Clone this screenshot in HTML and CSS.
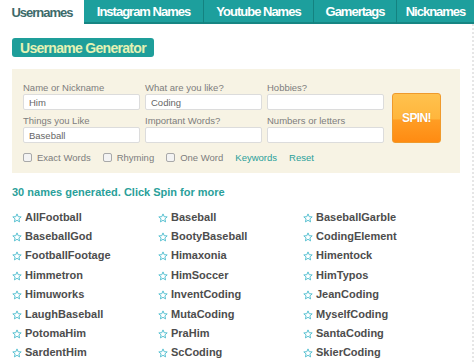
FILE: index.html
```html
<!DOCTYPE html>
<html lang="en">
<head>
  <meta charset="UTF-8">
  <meta name="viewport" content="width=device-width, initial-scale=1.0">
  <title>Username Generator</title>
  <link rel="stylesheet" href="styles.css">
</head>
<body>
  <nav class="tabs">
    <a class="tab active" href="#">Usernames</a>
    <a class="tab t-insta" href="#">Instagram Names</a>
    <a class="tab t-yt" href="#">Youtube Names</a>
    <a class="tab t-gamer" href="#">Gamertags</a>
    <a class="tab t-nick" href="#">Nicknames</a>
  </nav>

  <main class="content">
    <h1 class="badge">Username Generator</h1>

    <form class="panel" onsubmit="return false">
      <div class="inputs">
        <div class="fields">
          <label class="lbl">Name or Nickname</label>
          <label class="lbl">What are you like?</label>
          <label class="lbl">Hobbies?</label>
          <input class="txt" type="text" value="Him">
          <input class="txt" type="text" value="Coding">
          <input class="txt" type="text" value="">
          <label class="lbl lbl-2">Things you Like</label>
          <label class="lbl lbl-2">Important Words?</label>
          <label class="lbl lbl-2">Numbers or letters</label>
          <input class="txt" type="text" value="Baseball">
          <input class="txt" type="text" value="">
          <input class="txt" type="text" value="">
        </div>
        <button class="spin" type="button">SPIN!</button>
      </div>
      <div class="options">
        <label class="opt"><span class="box"></span>Exact Words</label>
        <label class="opt"><span class="box"></span>Rhyming</label>
        <label class="opt"><span class="box"></span>One Word</label>
        <a class="link" href="#">Keywords</a>
        <a class="link" href="#">Reset</a>
      </div>
    </form>

    <p class="count">30 names generated. Click Spin for more</p>

    <ul class="names" id="names"></ul>
  </main>

  <script>
    const names = [
      'AllFootball', 'Baseball', 'BaseballGarble',
      'BaseballGod', 'BootyBaseball', 'CodingElement',
      'FootballFootage', 'Himaxonia', 'Himentock',
      'Himmetron', 'HimSoccer', 'HimTypos',
      'Himuworks', 'InventCoding', 'JeanCoding',
      'LaughBaseball', 'MutaCoding', 'MyselfCoding',
      'PotomaHim', 'PraHim', 'SantaCoding',
      'SardentHim', 'ScCoding', 'SkierCoding'
    ];
    const star = '<svg class="star" viewBox="0 0 10 10" width="10" height="10"><polygon points="5,0.9 6.2,3.7 9.2,3.9 6.9,5.9 7.6,8.9 5,7.3 2.4,8.9 3.1,5.9 0.8,3.9 3.8,3.7" /></svg>';
    const list = document.getElementById('names');
    list.innerHTML = names.map(n => '<li class="name">' + star + '<span>' + n + '</span></li>').join('');
  </script>
</body>
</html>
```

FILE: styles.css
```css
body {
  margin: 0;
  font-family: "Liberation Sans", Arial, sans-serif;
  background: #fff;
  color: #4d4d4d;
  overflow: hidden;
}
.tabs {
  display: flex;
  height: 24px;
}
.tab {
  display: flex;
  align-items: center;
  justify-content: center;
  box-sizing: border-box;
  height: 24px;
  background: #1d9f9d;
  border-bottom: 2px solid #168583;
  border-left: 1px solid #148280;
  color: #fff;
  font-weight: bold;
  font-size: 13px;
  letter-spacing: -1px;
  text-decoration: none;
  padding-top: 1px;
}
.tab.active {
  width: 84px;
  background: #fff;
  border: none;
  color: #3d6a6a;
}
.t-insta { width: 119px; border-left: none; }
.t-yt { width: 110px; }
.t-gamer { width: 83px; }
.t-nick { flex: 1; }

.content {
  width: 448px;
  padding: 0 12px 20px;
  border-right: 2px dotted #e6e6e6;
}
.badge {
  display: inline-block;
  margin: 14px 0 0;
  height: 19px;
  line-height: 20px;
  padding: 0 8px;
  border-radius: 3px;
  background: #1e9e9a;
  color: #e4f2b4;
  font-size: 14px;
  letter-spacing: -0.7px;
}
.panel {
  margin-top: 12px;
  background: #f7f3e4;
  padding: 12px 20px 9px 11px;
}
.inputs {
  display: flex;
  align-items: flex-end;
  gap: 8px;
}
.fields {
  display: grid;
  grid-template-columns: 117px 117px 117px;
  column-gap: 5px;
}
.lbl {
  font-size: 9.5px;
  line-height: 13px;
  color: #7d7d7d;
}
.lbl-2 {
  margin-top: 4px;
}
.txt {
  box-sizing: border-box;
  height: 16px;
  width: 117px;
  margin: 0;
  padding: 0 5px;
  border: 1px solid #dcdcdc;
  border-radius: 2px;
  background: #fff;
  font-family: inherit;
  font-size: 9.5px;
  color: #666;
}
.spin {
  flex: none;
  width: 49px;
  height: 50px;
  border: 1px solid #ef9a2c;
  border-radius: 3px;
  background: linear-gradient(#ffc24e 0, #ffb53c 52%, #ff9d24 54%, #ff8b12 100%);
  color: #fff;
  font-family: inherit;
  font-weight: bold;
  font-size: 12px;
  letter-spacing: -0.6px;
  padding: 0;
  text-shadow: 0 0 1px rgba(200, 100, 0, 0.5);
}
.options {
  display: flex;
  align-items: center;
  gap: 12px;
  margin-top: 7px;
  height: 14px;
  font-size: 9.5px;
}
.opt {
  display: flex;
  align-items: center;
  gap: 5px;
  color: #7d7d7d;
}
.box {
  box-sizing: border-box;
  width: 9px;
  height: 9px;
  border: 1px solid #a9a9a9;
  border-radius: 2px;
  background: #f3f3f3;
}
.link {
  color: #2a9f9a;
  text-decoration: none;
}
.count {
  margin: 12px 0 0;
  line-height: 14px;
  font-size: 11px;
  font-weight: bold;
  color: #2a9f9a;
}
.names {
  list-style: none;
  margin: 8px 0 0;
  padding: 0;
  display: grid;
  grid-template-columns: 146px 145px 1fr;
  grid-auto-rows: 19.4px;
}
.name {
  display: flex;
  align-items: center;
  gap: 3px;
  font-size: 11px;
  font-weight: bold;
  color: #4d4d4d;
}
.star {
  flex: none;
  margin-top: 2px;
  fill: none;
  stroke: #5bc2d2;
  stroke-width: 1;
}
```
